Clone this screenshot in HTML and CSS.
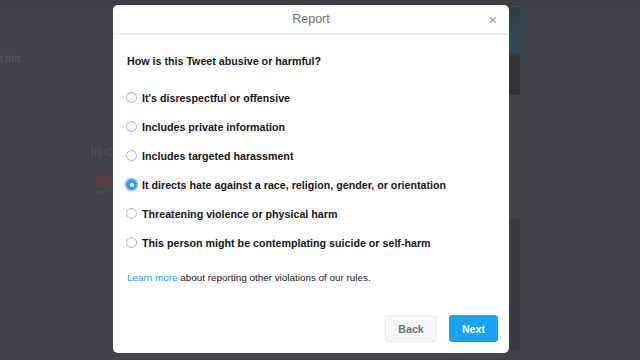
FILE: index.html
```html
<!DOCTYPE html>
<html lang="en">
<head>
    <meta charset="UTF-8">
    <meta name="viewport" content="width=device-width, initial-scale=1.0">
    <title>Report Tweet</title>
    <link rel="stylesheet" href="styles.css">
</head>
<body>
    <!-- Page behind the dimmed overlay -->
    <div class="page">
        <div class="topbar"></div>
        <div class="main">
            <div class="left-col">
                <p class="faint-text">t this</p>
                <div class="faint-box"></div>
            </div>
            <div class="center-col">
                <p class="faint-heading">In c</p>
                <div class="faint-logo"></div>
                <p class="faint-caption">RAPP</p>
            </div>
            <div class="right-col">
                <div class="media media-top"></div>
                <div class="media media-bottom"></div>
            </div>
        </div>
    </div>

    <div class="modal">
        <div class="modal-header">
            <h2>Report</h2>
            <span class="close">&times;</span>
        </div>

        <div class="modal-body">
            <p class="question">How is this Tweet abusive or harmful?</p>

            <ul class="options">
                <li><label><input type="radio" name="reason"> It's disrespectful or offensive</label></li>
                <li><label><input type="radio" name="reason"> Includes private information</label></li>
                <li><label><input type="radio" name="reason"> Includes targeted harassment</label></li>
                <li><label><input type="radio" name="reason" checked> It directs hate against a race, religion, gender, or orientation</label></li>
                <li><label><input type="radio" name="reason"> Threatening violence or physical harm</label></li>
                <li><label><input type="radio" name="reason"> This person might be contemplating suicide or self-harm</label></li>
            </ul>

            <p class="learn"><a href="#">Learn more</a> about reporting other violations of our rules.</p>
        </div>

        <div class="modal-footer">
            <button class="btn btn-back">Back</button>
            <button class="btn btn-next">Next</button>
        </div>
    </div>
</body>
</html>
```

FILE: styles.css
```css
* {
    margin: 0;
    padding: 0;
    box-sizing: border-box;
}

body {
    font-family: "Liberation Sans", Arial, sans-serif;
    background-color: #404549;
    width: 640px;
    height: 360px;
    overflow: hidden;
}

/* Background page */
.page {
    height: 360px;
}

.topbar {
    height: 7px;
    background-color: #3b3f43;
    border-bottom: 1px solid #44494d;
}

.main {
    display: flex;
    height: 352px;
}

.left-col {
    width: 73px;
}

.faint-text {
    margin-top: 45px;
    font-size: 10px;
    line-height: 14px;
    color: #575c60;
}

.faint-box {
    margin-top: 32px;
    height: 72px;
    border-right: 1px solid #43484c;
    border-bottom: 1px solid #43484c;
}

.center-col {
    width: 436px;
    padding-left: 17px;
}

.faint-heading {
    margin-top: 135px;
    font-size: 14px;
    line-height: 18px;
    color: #4f5458;
}

.faint-logo {
    margin-top: 12px;
    margin-left: 6px;
    width: 16px;
    height: 16px;
    border-radius: 50%;
    background-color: #553f41;
}

.faint-caption {
    margin-top: 2px;
    margin-left: 4px;
    font-size: 4px;
    color: #505458;
    font-weight: bold;
}

.right-col {
    width: 11px;
}

.media {
    background-color: #303539;
    border-radius: 0 2px 2px 0;
}

.media-top {
    height: 88px;
    background: linear-gradient(#303d48 0, #33495a 45px, #2e3337 50px);
}

.media-bottom {
    margin-top: 123px;
    height: 133px;
    background-color: #363b3f;
}

/* Modal */
.modal {
    position: fixed;
    left: 113px;
    top: 5px;
    width: 396px;
    height: 348px;
    background-color: #fff;
    border-radius: 5px;
    display: flex;
    flex-direction: column;
}

.modal-header {
    height: 30px;
    border-bottom: 2px solid #eaf0f4;
    display: flex;
    align-items: center;
    justify-content: center;
    position: relative;
}

.modal-header h2 {
    font-size: 12.5px;
    font-weight: normal;
    color: #66757f;
}

.close {
    position: absolute;
    right: 12px;
    top: 6px;
    font-size: 15px;
    color: #8899a6;
}

.modal-body {
    padding: 19px 13px 0;
}

.question {
    font-size: 10.7px;
    line-height: 14px;
    font-weight: bold;
    color: #14171a;
    padding-left: 1px;
}

.options {
    list-style: none;
    margin-top: 15px;
}

.options li {
    height: 29px;
    display: flex;
    align-items: center;
}

.options label {
    display: flex;
    align-items: center;
    gap: 5px;
    font-size: 10.7px;
    font-weight: bold;
    color: #14171a;
}

.options input {
    appearance: none;
    width: 11px;
    height: 11px;
    border: 1px solid #b5b5b5;
    border-radius: 50%;
    background-color: #fff;
    display: flex;
    align-items: center;
    justify-content: center;
}

.options input:checked {
    border-color: #3b99fc;
    background-color: #3b99fc;
    box-shadow: 0 0 0 1.5px #a7cdf7;
}

.options input:checked::after {
    content: "";
    width: 4px;
    height: 4px;
    border-radius: 50%;
    background-color: #fff;
}

.learn {
    margin-top: 14px;
    padding-left: 1px;
    font-size: 9.9px;
    line-height: 14px;
    color: #14171a;
}

.learn a {
    color: #1da1f2;
    text-decoration: none;
}

.modal-footer {
    margin-top: auto;
    padding: 0 11px 11px;
    display: flex;
    justify-content: flex-end;
    gap: 12px;
}

.btn {
    height: 27px;
    border-radius: 3px;
    font-family: "Liberation Sans", Arial, sans-serif;
    font-size: 10.7px;
    font-weight: bold;
    cursor: pointer;
}

.btn-back {
    width: 52px;
    background-color: #f5f8fa;
    border: 1px solid #e6ecf0;
    color: #66757f;
}

.btn-next {
    width: 49px;
    background-color: #1da1f2;
    border: 1px solid #1da1f2;
    color: #fff;
}
```
